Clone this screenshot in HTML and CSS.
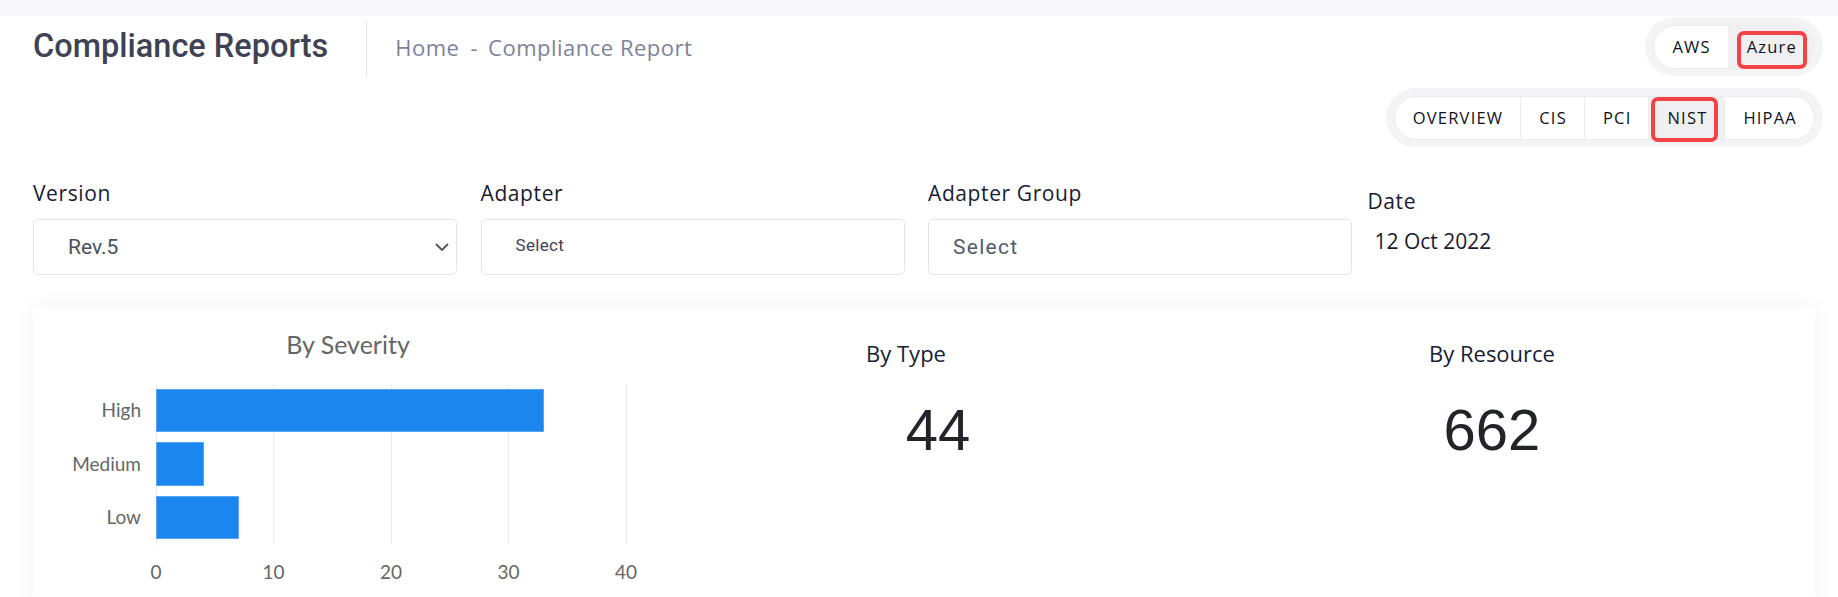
FILE: index.html
```html
<!DOCTYPE html>
<html lang="en">
<head>
  <meta charset="UTF-8" />
  <title>Compliance Reports</title>
  <link rel="stylesheet" href="styles.css">
</head>
<body>
  <div class="topbar"></div>
  <div class="page">
    <header class="head">
      <div class="head-left">
        <h1 class="title">Compliance Reports</h1>
        <div class="crumbs"><span>Home</span><span class="dash">-</span><span>Compliance Report</span></div>
      </div>
      <div class="head-right">
        <div class="pill-wrap">
          <div class="pills">
            <div class="pill">AWS</div>
            <div class="pill active mark-cloud">Azure</div>
          </div>
        </div>
        <div class="pill-wrap">
          <div class="pills">
            <div class="pill">OVERVIEW</div>
            <div class="pill">CIS</div>
            <div class="pill">PCI</div>
            <div class="pill active mark-std">NIST</div>
            <div class="pill">HIPAA</div>
          </div>
        </div>
      </div>
    </header>

    <section class="filters">
      <div class="field">
        <label>Version</label>
        <div class="box select-box">
          <span class="rev">Rev.5</span>
          <svg class="chev" width="14" height="8" viewBox="0 0 14 8"><path d="M1 1l6 6 6-6" fill="none" stroke="#555" stroke-width="1.8"/></svg>
        </div>
      </div>
      <div class="field">
        <label>Adapter</label>
        <div class="box"><span class="ph-small">Select</span></div>
      </div>
      <div class="field">
        <label>Adapter Group</label>
        <div class="box"><span class="ph-big">Select</span></div>
      </div>
      <div class="field date">
        <label>Date</label>
        <div class="date-val">12 Oct 2022</div>
      </div>
    </section>

    <section class="card">
      <div class="chart-col">
        <svg class="chart" width="610" height="290" viewBox="0 0 610 290">
          <text x="315" y="47" class="ch-title" text-anchor="middle">By Severity</text>
          <g stroke="#ececec" stroke-width="1">
            <line x1="123.5" y1="77" x2="123.5" y2="238"/>
            <line x1="240.5" y1="77" x2="240.5" y2="237"/>
            <line x1="358.5" y1="77" x2="358.5" y2="237"/>
            <line x1="475.5" y1="77" x2="475.5" y2="237"/>
            <line x1="593.5" y1="77" x2="593.5" y2="237"/>
          </g>
          <g fill="#1b87ee" stroke="#56a6f2" stroke-width="1">
            <rect x="123.5" y="82.5" width="387" height="42"/>
            <rect x="123.5" y="135.5" width="47" height="43"/>
            <rect x="123.5" y="189.5" width="82" height="42"/>
          </g>
          <g class="ch-label" text-anchor="end">
            <text x="108" y="110">High</text>
            <text x="108" y="163.5">Medium</text>
            <text x="108" y="217">Low</text>
          </g>
          <g class="ch-label" text-anchor="middle">
            <text x="123" y="272">0</text>
            <text x="240.5" y="272">10</text>
            <text x="358" y="272">20</text>
            <text x="475.5" y="272">30</text>
            <text x="593" y="272">40</text>
          </g>
        </svg>
      </div>
      <div class="stat">
        <div class="stat-title">By Type</div>
        <div class="stat-num shift">44</div>
      </div>
      <div class="stat">
        <div class="stat-title">By Resource</div>
        <div class="stat-num">662</div>
      </div>
    </section>
  </div>
</body>
</html>
```

FILE: styles.css
```css
body {
  margin: 0;
  background: #fff;
  font-family: 'Open Sans', sans-serif;
  color: #181c32;
  overflow: hidden;
}
.topbar {
  height: 16px;
  background: #f8f8fb;
}
.page {
  padding: 1px 15px 0 33px;
}

/* header */
.head {
  display: flex;
  justify-content: space-between;
  align-items: flex-start;
}
.head-left {
  display: flex;
  align-items: center;
  height: 60px;
}
.title {
  margin: 2px 0 0 0;
  padding: 0 38px 5px 0;
  height: 52px;
  line-height: 52px;
  border-right: 1px solid #e4e6ef;
  font-family: Roboto, sans-serif;
  font-weight: 500;
  font-size: 32.5px;
  color: #3f4254;
}
.crumbs {
  margin-left: 28px;
  font-size: 22px;
  letter-spacing: 0.5px;
  color: #7e8299;
}
.crumbs .dash {
  margin: 0 10px 0 11px;
}
.head-right {
  display: flex;
  flex-direction: column;
  align-items: flex-end;
  gap: 12px;
}
.pill-wrap {
  background: #f4f4f7;
  border-radius: 30px;
  padding: 8px 8px 7px 8px;
}
.pills {
  display: flex;
  height: 44px;
  box-sizing: border-box;
  background: #fff;
  border: 1px solid #ebebef;
  border-radius: 22px;
}
.pill {
  position: relative;
  padding: 0 17px 0 18px;
  line-height: 42px;
  font-size: 16.5px;
  letter-spacing: 1.2px;
  border-left: 1px solid #ececf0;
  color: #101221;
}
.pill:first-child {
  border-left: 0;
  border-radius: 22px 0 0 22px;
}
.pill:last-child {
  border-radius: 0 22px 22px 0;
}
.pill.active {
  background: #f0f0f2;
}
.mark-cloud::after,
.mark-std::after {
  content: "";
  position: absolute;
  border: 4px solid #f44346;
  border-radius: 7px;
}
.mark-cloud::after {
  left: 8px;
  right: 7px;
  top: 5px;
  bottom: -1px;
}
.mark-std::after {
  left: 2px;
  right: 6px;
  top: 0;
  bottom: -3px;
}

/* filters */
.filters {
  display: grid;
  grid-template-columns: 424px 424px 424px auto;
  column-gap: 23.5px;
  margin-top: 34px;
}
.field label {
  display: block;
  font-size: 21px;
  font-weight: 500;
  line-height: 24px;
  letter-spacing: 0.6px;
  margin-bottom: 14px;
}
.box {
  height: 56px;
  box-sizing: border-box;
  border: 1px solid #e4e6ef;
  border-radius: 5px;
  display: flex;
  align-items: center;
}
.select-box {
  justify-content: space-between;
  padding: 0 7px 0 34px;
}
.rev {
  font-family: Roboto, sans-serif;
  font-size: 21px;
  color: #4b4f5c;
}
.ph-small {
  font-family: Roboto, sans-serif;
  font-size: 17px;
  letter-spacing: 0.3px;
  color: #3f4254;
  padding: 0 0 4px 34px;
}
.ph-big {
  font-family: Roboto, sans-serif;
  font-size: 21px;
  letter-spacing: 1.3px;
  color: #555a66;
  padding-left: 24px;
}
.date {
  margin-left: -8px;
  padding-top: 8px;
}
.date-val {
  font-size: 21px;
  font-weight: 500;
  line-height: 24px;
  margin-top: 16px;
  padding-left: 7px;
}

/* summary card */
.card {
  display: grid;
  grid-template-columns: 580px 586px 586px;
  margin: 32px 8px 0 0;
  height: 300px;
  background: #fff;
  border-radius: 4px;
  box-shadow: 0 0 20px 0 rgba(76, 87, 125, 0.07);
}
.chart {
  display: block;
  overflow: visible;
}
.ch-title {
  font-family: Lato, sans-serif;
  font-size: 25px;
  fill: #666;
}
.ch-label {
  font-family: Lato, sans-serif;
  font-size: 19px;
  fill: #666;
}
.stat {
  text-align: center;
  padding-top: 34px;
}
.stat-title {
  font-size: 22px;
  line-height: 24px;
}
.stat-num {
  font-family: 'Liberation Sans', Arial, sans-serif;
  font-size: 58px;
  line-height: 58px;
  margin-top: 36px;
  color: #212529;
}
.stat-num.shift {
  padding-left: 64px;
}
```
